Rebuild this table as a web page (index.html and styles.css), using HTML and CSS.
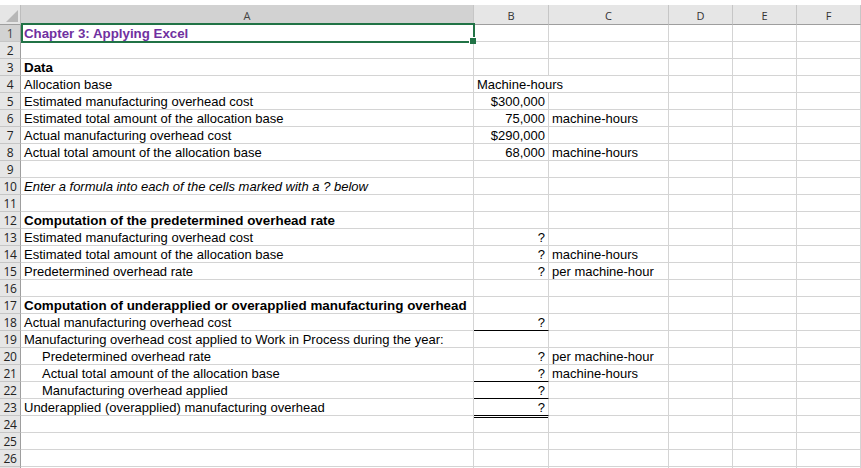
FILE: index.html
```html
<!DOCTYPE html>
<html>
<head>
<meta charset="utf-8">
<link rel="stylesheet" href="styles.css">
</head>
<body>
<div class="sheet">
  <div class="corner"><span class="tri"></span></div>
  <div class="ch sel">A</div><div class="ch">B</div><div class="ch">C</div><div class="ch">D</div><div class="ch">E</div><div class="ch">F</div>

  <div class="rh sel">1</div><div class="c title">Chapter 3: Applying Excel</div><div class="c"></div><div class="c"></div><div class="c"></div><div class="c"></div><div class="c"></div>
  <div class="rh">2</div><div class="c"></div><div class="c"></div><div class="c"></div><div class="c"></div><div class="c"></div><div class="c"></div>
  <div class="rh">3</div><div class="c b">Data</div><div class="c"></div><div class="c"></div><div class="c"></div><div class="c"></div><div class="c"></div>
  <div class="rh">4</div><div class="c">Allocation base</div><div class="c span2">Machine-hours</div><div class="c"></div><div class="c"></div><div class="c"></div>
  <div class="rh">5</div><div class="c">Estimated manufacturing overhead cost</div><div class="c r">$300,000</div><div class="c"></div><div class="c"></div><div class="c"></div><div class="c"></div>
  <div class="rh">6</div><div class="c">Estimated total amount of the allocation base</div><div class="c r">75,000</div><div class="c">machine-hours</div><div class="c"></div><div class="c"></div><div class="c"></div>
  <div class="rh">7</div><div class="c">Actual manufacturing overhead cost</div><div class="c r">$290,000</div><div class="c"></div><div class="c"></div><div class="c"></div><div class="c"></div>
  <div class="rh">8</div><div class="c">Actual total amount of the allocation base</div><div class="c r">68,000</div><div class="c">machine-hours</div><div class="c"></div><div class="c"></div><div class="c"></div>
  <div class="rh">9</div><div class="c"></div><div class="c"></div><div class="c"></div><div class="c"></div><div class="c"></div><div class="c"></div>
  <div class="rh">10</div><div class="c i">Enter a formula into each of the cells marked with a ? below</div><div class="c"></div><div class="c"></div><div class="c"></div><div class="c"></div><div class="c"></div>
  <div class="rh">11</div><div class="c"></div><div class="c"></div><div class="c"></div><div class="c"></div><div class="c"></div><div class="c"></div>
  <div class="rh">12</div><div class="c b">Computation of the predetermined overhead rate</div><div class="c"></div><div class="c"></div><div class="c"></div><div class="c"></div><div class="c"></div>
  <div class="rh">13</div><div class="c">Estimated manufacturing overhead cost</div><div class="c r">?</div><div class="c"></div><div class="c"></div><div class="c"></div><div class="c"></div>
  <div class="rh">14</div><div class="c">Estimated total amount of the allocation base</div><div class="c r">?</div><div class="c">machine-hours</div><div class="c"></div><div class="c"></div><div class="c"></div>
  <div class="rh">15</div><div class="c">Predetermined overhead rate</div><div class="c r">?</div><div class="c">per machine-hour</div><div class="c"></div><div class="c"></div><div class="c"></div>
  <div class="rh">16</div><div class="c"></div><div class="c"></div><div class="c"></div><div class="c"></div><div class="c"></div><div class="c"></div>
  <div class="rh">17</div><div class="c b">Computation of underapplied or overapplied manufacturing overhead</div><div class="c"></div><div class="c"></div><div class="c"></div><div class="c"></div><div class="c"></div>
  <div class="rh">18</div><div class="c">Actual manufacturing overhead cost</div><div class="c r ul">?</div><div class="c"></div><div class="c"></div><div class="c"></div><div class="c"></div>
  <div class="rh">19</div><div class="c">Manufacturing overhead cost applied to Work in Process during the year:</div><div class="c"></div><div class="c"></div><div class="c"></div><div class="c"></div><div class="c"></div>
  <div class="rh">20</div><div class="c ind">Predetermined overhead rate</div><div class="c r">?</div><div class="c">per machine-hour</div><div class="c"></div><div class="c"></div><div class="c"></div>
  <div class="rh">21</div><div class="c ind">Actual total amount of the allocation base</div><div class="c r ul">?</div><div class="c">machine-hours</div><div class="c"></div><div class="c"></div><div class="c"></div>
  <div class="rh">22</div><div class="c ind">Manufacturing overhead applied</div><div class="c r ul">?</div><div class="c"></div><div class="c"></div><div class="c"></div><div class="c"></div>
  <div class="rh">23</div><div class="c">Underapplied (overapplied) manufacturing overhead</div><div class="c r ul">?</div><div class="c"></div><div class="c"></div><div class="c"></div><div class="c"></div>
  <div class="rh">24</div><div class="c"></div><div class="c dbl"></div><div class="c"></div><div class="c"></div><div class="c"></div><div class="c"></div>
  <div class="rh">25</div><div class="c"></div><div class="c"></div><div class="c"></div><div class="c"></div><div class="c"></div><div class="c"></div>
  <div class="rh">26</div><div class="c"></div><div class="c"></div><div class="c"></div><div class="c"></div><div class="c"></div><div class="c"></div>
  <div class="rh"></div><div class="c"></div><div class="c"></div><div class="c"></div><div class="c"></div><div class="c"></div><div class="c"></div>

  <div class="selbox"><span class="handle"></span></div>
</div>
</body>
</html>
```

FILE: styles.css
```css
html, body {
  margin: 0;
  padding: 0;
  background: #ffffff;
  overflow: hidden;
}
body {
  padding-top: 5px;
  height: 463px;
}
.sheet {
  position: relative;
  display: grid;
  grid-template-columns: 21px 453px 75px 120px 64px 64px 64px;
  grid-template-rows: 20px;
  grid-auto-rows: 17px;
  font-family: "Liberation Sans", Arial, sans-serif;
  font-size: 13px;
  color: #000;
}
.corner {
  position: relative;
  background: #e6e6e6;
  border-right: 1px solid #bdbdbd;
  border-bottom: 1px solid #9e9e9e;
  box-sizing: border-box;
}
.tri {
  position: absolute;
  right: 2px;
  bottom: 2px;
  width: 0;
  height: 0;
  border-left: 12px solid transparent;
  border-bottom: 12px solid #b7b7b7;
}
.ch {
  box-sizing: border-box;
  background: #e6e6e6;
  border-right: 1px solid #c6c6c6;
  border-bottom: 1px solid #9e9e9e;
  display: flex;
  align-items: center;
  justify-content: center;
  font-family: "Open Sans", "Noto Sans", sans-serif;
  font-size: 11px;
  color: #333;
  padding-top: 1px;
}
.ch.sel {
  background: #d2d2d2;
  color: #444;
  border-bottom: 1px solid #217346;
}
.rh {
  box-sizing: border-box;
  background: #e6e6e6;
  border-right: 1px solid #9e9e9e;
  border-bottom: 1px solid #c6c6c6;
  display: flex;
  align-items: center;
  justify-content: center;
  font-family: "Open Sans", "Noto Sans", sans-serif;
  font-size: 12px;
  letter-spacing: -0.3px;
  color: #222;
  padding-top: 1px;
}
.rh.sel {
  background: #d2d2d2;
  color: #444;
}
.c {
  box-sizing: border-box;
  border-right: 1px solid #d4d4d4;
  border-bottom: 1px solid #d4d4d4;
  white-space: nowrap;
  overflow: visible;
  display: flex;
  align-items: flex-end;
  padding: 0 3px 0 3px;
  line-height: 15px;
}
.c.r { justify-content: flex-end; }
.c.b { font-weight: bold; font-size: 13.4px; }
.c.i { font-style: italic; }
.c.ind { padding-left: 21px; }
.c.span2 { grid-column: span 2; }
.c.ul { border-bottom: 1px solid #000; }
.c.dbl { background: linear-gradient(to bottom, transparent 1px, #000 1px, #000 2px, transparent 2px); }
.title {
  color: #7030a0;
  font-weight: bold;
  font-size: 13.3px;
}
.selbox {
  position: absolute;
  left: 21px;
  top: 18px;
  width: 454px;
  height: 20px;
  border: 2px solid #217346;
  box-sizing: border-box;
  pointer-events: none;
}
.handle {
  position: absolute;
  right: -3px;
  bottom: -3px;
  width: 6px;
  height: 6px;
  background: #217346;
  border: 1px solid #fff;
  border-right: none;
  border-bottom: none;
}
```
